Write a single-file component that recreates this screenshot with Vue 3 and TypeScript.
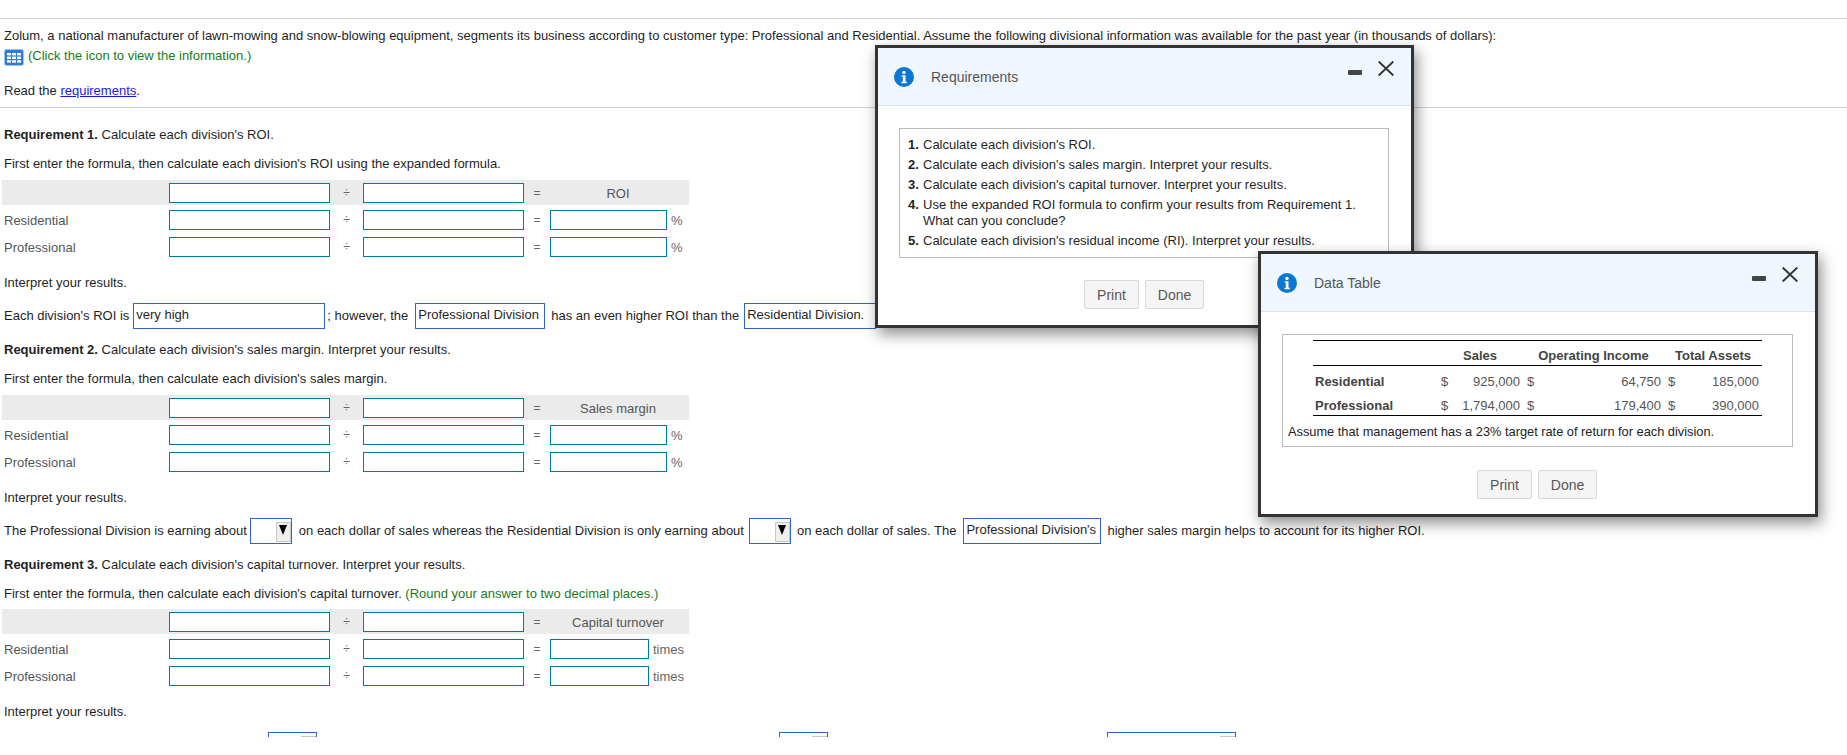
<script setup lang="ts">
interface Row { label: string }
const rows: Row[] = [{ label: 'Residential' }, { label: 'Professional' }]
</script>

<template>
  <div class="page">
    <div class="top-space"></div>
    <section class="intro">
      <p class="line first">Zolum, a national manufacturer of lawn-mowing and snow-blowing equipment, segments its business according to customer type: Professional and Residential. Assume the following divisional information was available for the past year (in thousands of dollars):</p>
      <p class="line click">
        <svg class="grid-icon" width="20" height="17" viewBox="0 0 20 17">
          <rect x="0.5" y="0.5" width="19" height="16" rx="2" fill="#2f7bd6" stroke="#9cc3ee" />
          <g fill="#fff">
            <rect x="3" y="4" width="4" height="2.4" /><rect x="8" y="4" width="4" height="2.4" /><rect x="13" y="4" width="4" height="2.4" />
            <rect x="3" y="7.6" width="4" height="2.4" /><rect x="8" y="7.6" width="4" height="2.4" /><rect x="13" y="7.6" width="4" height="2.4" />
            <rect x="3" y="11.2" width="4" height="2.4" /><rect x="8" y="11.2" width="4" height="2.4" /><rect x="13" y="11.2" width="4" height="2.4" />
          </g>
        </svg>
        <span class="green">(Click the icon to view the information.)</span>
      </p>
      <p class="line read">Read the <a class="link">requirements</a>.</p>
    </section>

    <section class="one">
      <p class="line"><b>Requirement 1.</b> Calculate each division's ROI.</p>
      <p class="line gap">First enter the formula, then calculate each division's ROI using the expanded formula.</p>
      <div class="calc">
        <div class="band">
          <span></span><i class="inp"></i><span class="sep">÷</span><i class="inp"></i><span class="sep">=</span>
          <span class="res">ROI</span>
        </div>
        <div v-for="r in rows" :key="r.label" class="row">
          <span class="lab">{{ r.label }}</span><i class="inp"></i><span class="sep">÷</span><i class="inp"></i><span class="sep">=</span>
          <span class="out"><i class="inp wide"></i><span class="unit">%</span></span>
        </div>
      </div>
      <p class="line interp">Interpret your results.</p>
      <div class="flow">
        <span class="t">Each division's ROI is</span>
        <span class="box b1">very high</span>
        <span class="t">; however, the</span>
        <span class="box b2">Professional Division</span>
        <span class="t">has an even higher ROI than the</span>
        <span class="box b3">Residential Division.</span>
      </div>
    </section>

    <section class="two">
      <p class="line"><b>Requirement 2.</b> Calculate each division's sales margin. Interpret your results.</p>
      <p class="line gap">First enter the formula, then calculate each division's sales margin.</p>
      <div class="calc">
        <div class="band">
          <span></span><i class="inp"></i><span class="sep">÷</span><i class="inp"></i><span class="sep">=</span>
          <span class="res">Sales margin</span>
        </div>
        <div v-for="r in rows" :key="r.label" class="row">
          <span class="lab">{{ r.label }}</span><i class="inp"></i><span class="sep">÷</span><i class="inp"></i><span class="sep">=</span>
          <span class="out"><i class="inp wide"></i><span class="unit">%</span></span>
        </div>
      </div>
      <p class="line interp">Interpret your results.</p>
      <div class="flow">
        <span class="t">The Professional Division is earning about</span>
        <span class="drop d1"><span class="arrow"></span></span>
        <span class="t">on each dollar of sales whereas the Residential Division is only earning about</span>
        <span class="drop"><span class="arrow"></span></span>
        <span class="t">on each dollar of sales. The</span>
        <span class="box b4">Professional Division's</span>
        <span class="t">higher sales margin helps to account for its higher ROI.</span>
      </div>
    </section>

    <section class="three">
      <p class="line"><b>Requirement 3.</b> Calculate each division's capital turnover. Interpret your results.</p>
      <p class="line gap">First enter the formula, then calculate each division's capital turnover. <span class="green">(Round your answer to two decimal places.)</span></p>
      <div class="calc tight">
        <div class="band">
          <span></span><i class="inp"></i><span class="sep">÷</span><i class="inp"></i><span class="sep">=</span>
          <span class="res">Capital turnover</span>
        </div>
        <div v-for="r in rows" :key="r.label" class="row">
          <span class="lab">{{ r.label }}</span><i class="inp"></i><span class="sep">÷</span><i class="inp"></i><span class="sep">=</span>
          <span class="out"><i class="inp narrow"></i><span class="unit">times</span></span>
        </div>
      </div>
      <p class="line interp">Interpret your results.</p>
      <div class="clipped">
        <span class="box stub s1"><span class="arrow"></span></span>
        <span class="box stub s2"><span class="arrow"></span></span>
        <span class="box stub s3"><span class="arrow"></span></span>
      </div>
    </section>

    <div class="modal req-modal">
      <header class="m-head">
        <svg class="info" width="20" height="20" viewBox="0 0 20 20">
          <circle cx="10" cy="10" r="10" fill="#0a77d1" />
          <circle cx="10" cy="5.4" r="1.7" fill="#fff" />
          <path d="M7.6 8.2h3.9v6.6h1.3v1.4H7.5v-1.4h1.3V9.6H7.6z" fill="#fff" />
        </svg>
        <span class="m-title">Requirements</span>
        <span class="minus"></span>
        <svg class="close" width="16" height="15" viewBox="0 0 16 15"><path d="M0.7 0.5l14.6 14M15.3 0.5l-14.6 14" stroke="#333" stroke-width="1.9" fill="none" /></svg>
      </header>
      <div class="m-body">
        <ol class="req-list">
          <li><b>1.</b><span>Calculate each division's ROI.</span></li>
          <li><b>2.</b><span>Calculate each division's sales margin. Interpret your results.</span></li>
          <li><b>3.</b><span>Calculate each division's capital turnover. Interpret your results.</span></li>
          <li><b>4.</b><span>Use the expanded ROI formula to confirm your results from Requirement 1.<br />What can you conclude?</span></li>
          <li><b>5.</b><span>Calculate each division's residual income (RI). Interpret your results.</span></li>
        </ol>
      </div>
      <div class="m-btns"><button class="btn print">Print</button><button class="btn done">Done</button></div>
    </div>

    <div class="modal data-modal">
      <header class="m-head">
        <svg class="info" width="20" height="20" viewBox="0 0 20 20">
          <circle cx="10" cy="10" r="10" fill="#0a77d1" />
          <circle cx="10" cy="5.4" r="1.7" fill="#fff" />
          <path d="M7.6 8.2h3.9v6.6h1.3v1.4H7.5v-1.4h1.3V9.6H7.6z" fill="#fff" />
        </svg>
        <span class="m-title">Data Table</span>
        <span class="minus"></span>
        <svg class="close" width="16" height="15" viewBox="0 0 16 15"><path d="M0.7 0.5l14.6 14M15.3 0.5l-14.6 14" stroke="#333" stroke-width="1.9" fill="none" /></svg>
      </header>
      <div class="m-body data-body">
        <table class="dt">
          <colgroup>
            <col class="c0" /><col class="c1" /><col class="c2" /><col class="c1" /><col class="c3" /><col class="c1" /><col class="c4" />
          </colgroup>
          <thead>
            <tr><th></th><th colspan="2">Sales</th><th colspan="2">Operating Income</th><th colspan="2">Total Assets</th></tr>
          </thead>
          <tbody>
            <tr><td class="name">Residential</td><td class="cur">$</td><td class="num">925,000</td><td class="cur">$</td><td class="num">64,750</td><td class="cur">$</td><td class="num">185,000</td></tr>
            <tr><td class="name">Professional</td><td class="cur">$</td><td class="num">1,794,000</td><td class="cur">$</td><td class="num">179,400</td><td class="cur">$</td><td class="num">390,000</td></tr>
          </tbody>
        </table>
        <p class="assume">Assume that management has a 23% target rate of return for each division.</p>
      </div>
      <div class="m-btns"><button class="btn print">Print</button><button class="btn done">Done</button></div>
    </div>
  </div>
</template>

<style>
html, body { margin: 0; background: #fff; }
</style>

<style scoped>
.page {
  position: relative;
  width: 1847px;
  height: 755px;
  overflow: hidden;
  font-family: "Liberation Sans", Arial, sans-serif;
  font-size: 13px;
  color: #1f1f1f;
  background: #fff;
}
.top-space { height: 18px; border-bottom: 1px solid #ccd2dc; }
p { margin: 0; }
.line { height: 16px; line-height: 16px; padding-left: 4px; white-space: nowrap; }
.first { margin-top: 9px; }
.click { display: flex; align-items: center; gap: 4px; margin-top: 4px; }
.grid-icon { flex: none; margin-top: 2px; }
.read { margin-top: 19px; padding-bottom: 8px; border-bottom: 1px solid #ccd2dc; }
.green { color: #1a7a1a; }
.link { color: #1a1ae6; text-decoration: underline; }
.one { margin-top: 18px; }
.two { margin-top: 12px; }
.three { margin-top: 12px; }
.one .line, .two .line, .three .line { line-height: 18px; }
.gap { margin-top: 13px; }
.calc { margin: 9px 0 0 2px; width: 687px; }
.calc.tight { margin-top: 8px; }
.band, .row {
  display: grid;
  grid-template-columns: 167px 161px 33px 161px 26px 139px;
  align-items: center;
}
.band { height: 25px; background: #ebebeb; }
.row { height: 20px; }
.band + .row { margin-top: 5px; }
.row + .row { margin-top: 7px; }
.inp {
  display: block;
  height: 20px;
  box-sizing: border-box;
  border: 1px solid #007c9e;
  background: #fff;
}
.inp.wide { width: 117px; flex: none; }
.inp.narrow { width: 99px; flex: none; }
.sep { text-align: center; color: #666; font-size: 12px; }
.lab { padding-left: 2px; color: #555; }
.res { text-align: center; color: #555; padding: 2px 3px 0 0; }
.out { display: flex; align-items: center; gap: 4px; }
.unit { color: #666; }
.interp { margin-top: 17px; }
.flow { display: flex; align-items: center; height: 26px; padding-left: 4px; white-space: nowrap; margin-top: 13px; }
.t { flex: none; margin-top: -2px; }
.box {
  flex: none;
  box-sizing: border-box;
  height: 26px;
  line-height: 22px;
  border: 1px solid #2f66cc;
  padding-left: 2px;
  background: #fff;
}
.b1 { width: 192px; margin: 0 2px 0 4px; }
.b2 { width: 130px; margin: 0 6px 0 7px; }
.b3 { width: 132px; margin-left: 5px; }
.b4 { width: 138px; margin: 0 6px 0 7px; }
.drop {
  flex: none;
  position: relative;
  box-sizing: border-box;
  width: 42px;
  height: 26px;
  margin: 0 6px 0 5px;
  border: 1px solid #2f66cc;
  background: #fff;
}
.d1 { margin: 0 7px 0 3px; }
.arrow {
  position: absolute;
  top: 3px;
  right: 0;
  width: 15px;
  height: 20px;
  box-sizing: border-box;
  background: #efefef;
  border: 1px solid #c8c8c8;
}
.drop .arrow::after {
  content: "";
  position: absolute;
  left: 2px;
  top: 2px;
  border-left: 4.5px solid transparent;
  border-right: 4.5px solid transparent;
  border-top: 10px solid #000;
}
.clipped { position: relative; height: 5px; margin-top: 13px; overflow: hidden; }
.stub { position: absolute; top: 0; }
.s1 { left: 268px; width: 49px; }
.s2 { left: 779px; width: 49px; }
.s3 { left: 1107px; width: 129px; }

.modal {
  position: absolute;
  box-sizing: border-box;
  border: 3px solid #333;
  background: #fff;
  box-shadow: 3px 6px 14px rgba(0, 0, 0, 0.45);
}
.req-modal { left: 875px; top: 45px; width: 539px; height: 283px; }
.data-modal { left: 1258px; top: 251px; width: 560px; height: 266px; }
.m-head {
  position: relative;
  display: flex;
  align-items: center;
  height: 58px;
  box-sizing: border-box;
  padding-left: 16px;
  background: #f0f6fd;
  border-bottom: 1px solid #d5e5f3;
}
.info { flex: none; }
.m-title { margin-left: 17px; color: #555; font-size: 14px; }
.minus { position: absolute; right: 49px; top: 22px; width: 14px; height: 5px; background: #444; border-radius: 1px; }
.close { position: absolute; right: 17px; top: 13px; }
.m-body { margin: 22px 0 0 21px; width: 490px; height: 130px; box-sizing: border-box; border: 1px solid #bbb; }
.req-list { list-style: none; margin: 0; padding: 8px 0 0 8px; }
.req-list li { display: flex; gap: 6px; line-height: 16px; margin-bottom: 4px; }
.req-list b { width: 9px; flex: none; }
.m-btns { position: absolute; display: flex; gap: 6px; }
.req-modal .m-btns { left: 206px; top: 232px; }
.data-modal .m-btns { left: 216px; top: 216px; }
.btn {
  box-sizing: border-box;
  height: 29px;
  padding: 0;
  font-family: inherit;
  font-size: 14px;
  color: #555;
  background: #f5f5f5;
  border: 1px solid #d8d8d8;
  border-radius: 2px;
}
.print { width: 55px; }
.done { width: 59px; }
.data-body { width: 511px; height: 113px; padding: 5px 0 0 30px; }
.dt { border-collapse: collapse; table-layout: fixed; width: 449px; font-size: 13px; color: #555; }
.dt th, .dt td { padding: 0 0 2px; height: 25px; box-sizing: border-box; vertical-align: bottom; }
.dt thead tr { border-top: 1px solid #000; border-bottom: 1px solid #000; }
.dt tbody tr:last-child { border-bottom: 1px solid #000; }
.dt th { font-weight: bold; text-align: center; color: #444; }
.c0 { width: 124px; }
.c1 { width: 16px; }
.c2 { width: 70px; }
.c3 { width: 125px; }
.c4 { width: 82px; }
.dt .name { font-weight: bold; padding-left: 2px; color: #444; }
.dt .cur { padding-left: 4px; }
.dt .num { text-align: right; padding-right: 3px; }
.assume { margin: 8px 0 0 -25px; line-height: 16px; white-space: nowrap; color: #222; font-size: 12.8px; }
</style>
